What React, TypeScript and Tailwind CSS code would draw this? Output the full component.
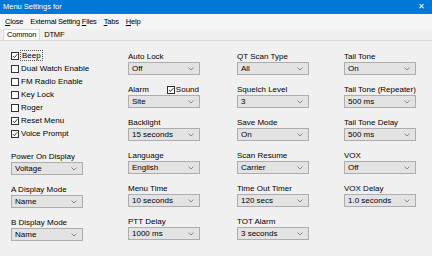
import React from "react";

const font = { fontFamily: '"Liberation Sans", Arial, sans-serif' };

const Chevron = () => (
  <svg width="6" height="4" viewBox="0 0 6 4" className="shrink-0">
    <path d="M0.5 0.5 L3 3 L5.5 0.5" fill="none" stroke="#707070" strokeWidth="0.8" />
  </svg>
);

const Select = ({ value }: { value: string }) => (
  <div className="flex h-[13px] w-[72px] items-center justify-between border border-[#adadad] bg-[#e3e3e3] pl-[3px] pr-[5px] text-[8px] leading-[11px] text-black">
    <span>{value}</span>
    <Chevron />
  </div>
);

const CheckBox = ({ checked }: { checked: boolean }) => (
  <div className="flex h-[8px] w-[8px] shrink-0 items-center justify-center border border-[#333] bg-white">
    {checked && (
      <svg width="6" height="6" viewBox="0 0 6 6">
        <path d="M0.8 3 L2.4 4.6 L5.3 1.2" fill="none" stroke="#222" strokeWidth="0.9" />
      </svg>
    )}
  </div>
);

const Check = ({ label, checked, focus }: { label: string; checked: boolean; focus?: boolean }) => (
  <div className="flex h-[13px] items-center gap-[1px] text-[8px] text-black">
    <CheckBox checked={checked} />
    <span className={focus ? "border border-dotted border-[#555] px-[1px] leading-[9px]" : "px-[1px] leading-[9px]"}>
      {label}
    </span>
  </div>
);

const Field = ({ label, value }: { label: string; value: string }) => (
  <div className="flex h-[33px] flex-col">
    <div className="h-[10px] text-[8px] leading-[10px] text-black">{label}</div>
    <Select value={value} />
  </div>
);

const checks = [
  { label: "Beep", checked: true, focus: true },
  { label: "Dual Watch Enable", checked: false },
  { label: "FM Radio Enable", checked: false },
  { label: "Key Lock", checked: false },
  { label: "Roger", checked: false },
  { label: "Reset Menu", checked: true },
  { label: "Voice Prompt", checked: true },
];

const Menu = ({ first, rest }: { first: string; rest: string }) => (
  <span>
    <span className="underline">{first}</span>
    {rest}
  </span>
);

export default function App() {
  return (
    <div style={font} className="flex h-[256px] w-[432px] flex-col overflow-hidden bg-[#f0f0f0]">
      {/* title bar */}
      <div className="flex h-[14px] items-center justify-between bg-[#0078d7] pl-[3px] pr-[7px] text-[7.5px] text-white">
        <span>Menu Settings for</span>
        <span className="text-[8px] leading-[8px]">✕</span>
      </div>

      {/* menu bar */}
      <div className="flex h-[15px] items-center gap-[7px] bg-[#f5f5f5] pl-[5px] text-[7.5px] tracking-[-0.2px] text-black">
        <Menu first="C" rest="lose" />
        <span>
          External Setting <span className="underline">F</span>iles
        </span>
        <Menu first="T" rest="abs" />
        <Menu first="H" rest="elp" />
      </div>

      {/* tabs */}
      <div className="flex h-[11px] items-end pl-[3px] text-[7.5px] tracking-[-0.2px] text-black">
        <div className="flex h-[11px] items-center border border-b-0 border-[#d9d9d9] bg-white px-[3px]">Common</div>
        <div className="flex h-[10px] items-center px-[4px]">DTMF</div>
      </div>

      {/* content */}
      <div className="flex flex-1 border-t border-[#d9d9d9] pl-[11px]">
        <div className="flex w-[117px] flex-col pt-[8px]">
          <div className="flex h-[103px] flex-col">
            {checks.map((c) => (
              <Check key={c.label} label={c.label} checked={c.checked} focus={c.focus} />
            ))}
          </div>
          <Field label="Power On Display" value="Voltage" />
          <Field label="A Display Mode" value="Name" />
          <Field label="B Display Mode" value="Name" />
        </div>

        <div className="flex w-[109px] flex-col pt-[11px]">
          <Field label="Auto Lock" value="Off" />
          <div className="flex h-[33px] flex-col">
            <div className="flex h-[10px] w-[72px] items-center justify-between text-[8px] leading-[10px] text-black">
              <span>Alarm</span>
              <div className="flex items-center gap-[1px] pr-[1px]">
                <CheckBox checked />
                <span>Sound</span>
              </div>
            </div>
            <Select value="Site" />
          </div>
          <Field label="Backlight" value="15 seconds" />
          <Field label="Language" value="English" />
          <Field label="Menu Time" value="10 seconds" />
          <Field label="PTT Delay" value="1000 ms" />
        </div>

        <div className="flex w-[107px] flex-col pt-[11px]">
          <Field label="QT Scan Type" value="All" />
          <Field label="Squelch Level" value="3" />
          <Field label="Save Mode" value="On" />
          <Field label="Scan Resume" value="Carrier" />
          <Field label="Time Out Timer" value="120 secs" />
          <Field label="TOT Alarm" value="3 seconds" />
        </div>

        <div className="flex w-[80px] flex-col pt-[11px]">
          <Field label="Tail Tone" value="On" />
          <Field label="Tail Tone (Repeater)" value="500 ms" />
          <Field label="Tail Tone Delay" value="500 ms" />
          <Field label="VOX" value="Off" />
          <Field label="VOX Delay" value="1.0 seconds" />
        </div>
      </div>
    </div>
  );
}
